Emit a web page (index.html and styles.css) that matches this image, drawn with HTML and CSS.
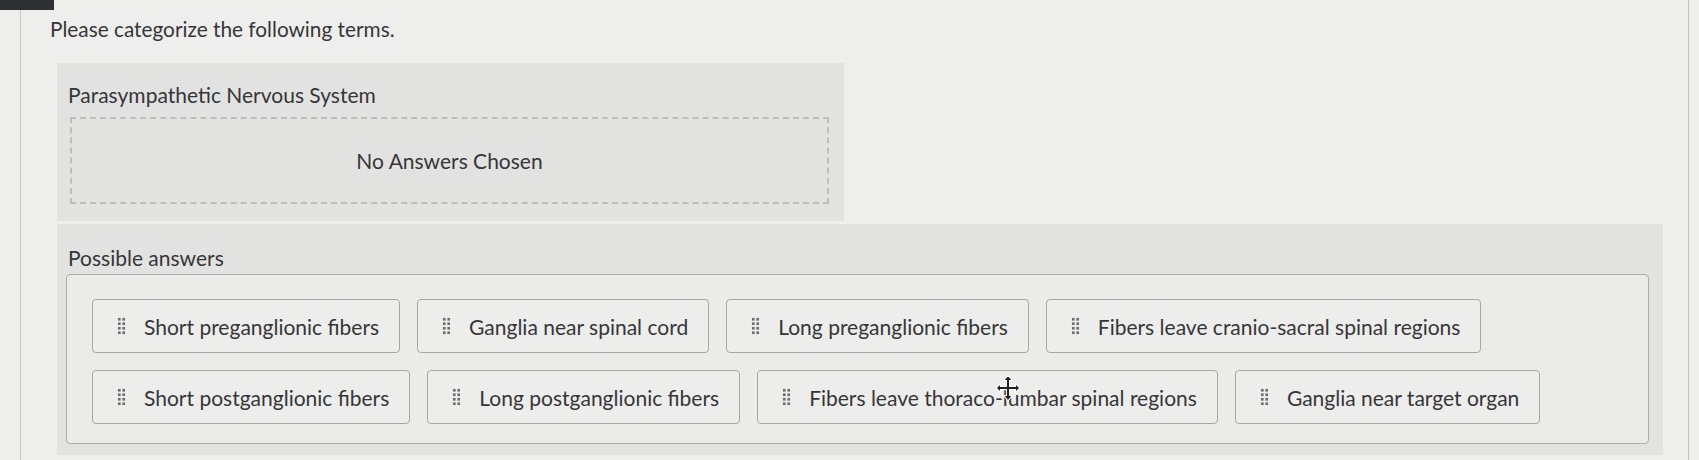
FILE: index.html
```html
<!DOCTYPE html>
<html>
<head>
    <title>Categorize</title>
    <link rel="stylesheet" href="styles.css">
</head>
<body>
    <div class="corner"></div>
    <div class="page">
        <p class="prompt">Please categorize the following terms.</p>

        <div class="panel category">
            <div class="label">Parasympathetic Nervous System</div>
            <div class="dropzone">No Answers Chosen</div>
        </div>

        <div class="panel answers">
            <div class="label">Possible answers</div>
            <div class="pool">
                <div class="chip"><span class="grip"></span>Short preganglionic fibers</div>
                <div class="chip"><span class="grip"></span>Ganglia near spinal cord</div>
                <div class="chip"><span class="grip"></span>Long preganglionic fibers</div>
                <div class="chip"><span class="grip"></span>Fibers leave cranio-sacral spinal regions</div>
                <div class="chip"><span class="grip"></span>Short postganglionic fibers</div>
                <div class="chip"><span class="grip"></span>Long postganglionic fibers</div>
                <div class="chip"><span class="grip"></span>Fibers leave thoraco-lumbar spinal regions</div>
                <div class="chip"><span class="grip"></span>Ganglia near target organ</div>
            </div>
        </div>
    </div>

    <!-- mouse pointer caught in the shot -->
    <svg class="cursor" width="26" height="28" viewBox="0 0 24 26">
        <path d="M12 1 L16 6 L13.5 6 L13.5 11.5 L19 11.5 L19 9 L23 13 L19 17 L19 14.5 L13.5 14.5 L13.5 20 L16 20 L12 25 L8 20 L10.5 20 L10.5 14.5 L5 14.5 L5 17 L1 13 L5 9 L5 11.5 L10.5 11.5 L10.5 6 L8 6 Z" fill="#222" stroke="#fff" stroke-width="1"/>
    </svg>
</body>
</html>
```

FILE: styles.css
```css
body {
    margin: 0;
    background: #eeeeec;
    font-family: Lato, "Open Sans", sans-serif;
    color: #36363a;
    height: 460px;
    overflow: hidden;
    position: relative;
}
.corner {
    position: absolute;
    top: 0;
    left: 0;
    width: 54px;
    height: 10px;
    background: #2f3033;
}
.page {
    margin-left: 20px;
    width: 1669px;
    height: 460px;
    border-left: 1px solid #c9c9c7;
    border-right: 1px solid #c2c2c0;
    padding-left: 29px;
    box-sizing: border-box;
}
.prompt {
    margin: 0;
    padding-top: 17px;
    font-size: 20.8px;
    line-height: 24px;
}
.panel {
    background: #e2e2e1;
    margin-left: 7px;
}
.label {
    font-size: 21px;
    line-height: 24px;
}
.category {
    width: 787px;
    margin-top: 22px;
    padding: 20px 15px 17px 11px;
    box-sizing: border-box;
}
.dropzone {
    margin-top: 10px;
    margin-left: 2px;
    height: 87px;
    border: 2px dashed #bdbdbb;
    display: flex;
    align-items: center;
    justify-content: center;
    font-size: 21px;
    box-sizing: border-box;
}
.answers {
    width: 1606px;
    margin-top: 3px;
    padding: 22px 14px 11px 9px;
    box-sizing: border-box;
}
.answers .label {
    margin-left: 2px;
}
.pool {
    margin-top: 4px;
    background: #ebebea;
    border: 1px solid #acacab;
    border-radius: 4px;
    height: 170px;
    box-sizing: border-box;
    padding: 24px 20px 0 25px;
    display: flex;
    flex-wrap: wrap;
    align-content: flex-start;
    gap: 17px 17px;
}
.chip {
    display: flex;
    align-items: center;
    height: 54px;
    box-sizing: border-box;
    padding: 0 20px 0 24px;
    border: 1px solid #a6a6a5;
    border-radius: 4px;
    background: #ededeb;
    font-size: 21px;
    white-space: nowrap;
}
.grip {
    width: 9px;
    height: 18px;
    margin-right: 18px;
    background-image: radial-gradient(circle, #6e6e70 1.3px, transparent 1.7px);
    background-size: 4.5px 4.5px;
}
.cursor {
    position: absolute;
    left: 995px;
    top: 374px;
}
```
